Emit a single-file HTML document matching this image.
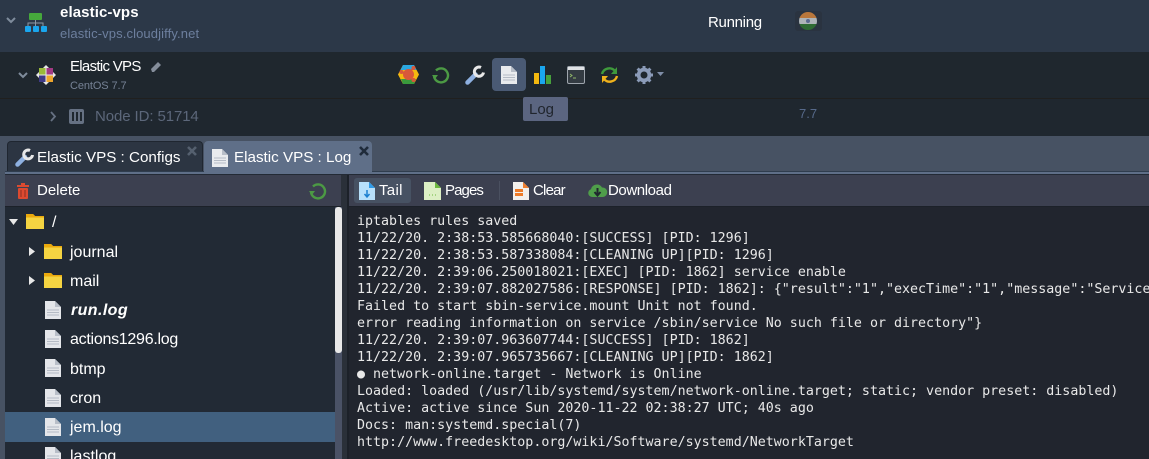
<!DOCTYPE html>
<html><head><meta charset="utf-8"><style>
html{margin:0;padding:0;width:1149px;height:459px;overflow:hidden;background:#21252e}
body{margin:0;padding:0;width:1149px;height:459px;position:relative;overflow:hidden;background:#21252e;font-family:"Liberation Sans",sans-serif;color:#fff}
#w{position:absolute;left:0;top:0;width:1149px;height:459px;overflow:hidden}
.a{position:absolute}
.t{position:absolute;white-space:nowrap;font-size:16px;line-height:20px;color:#fff}
svg{position:absolute;overflow:visible}
#log{position:absolute;left:357px;top:213px;font-family:"DejaVu Sans Mono",monospace;font-size:13.32px;line-height:17px;color:#e8e8e8;white-space:pre}
</style></head><body><div id="w">
<div class="a" style="left:0;top:0;width:1149px;height:52px;background:#2c3848"></div>
<div class="a" style="left:0;top:52px;width:1149px;height:46px;background:#1f272e"></div>
<div class="a" style="left:0;top:98px;width:1149px;height:1px;background:#20201f"></div>
<div class="a" style="left:0;top:99px;width:1149px;height:37px;background:#1f272f"></div>
<!-- panel -->
<div class="a" style="left:0;top:136px;width:1149px;height:35px;background:#475263"></div>
<div class="a" style="left:0;top:171px;width:1149px;height:1px;background:#2f3d4e"></div>
<div class="a" style="left:5px;top:172px;width:1144px;height:2px;background:#5f6f88"></div>
<div class="a" style="left:0;top:136px;width:5px;height:323px;background:#475263"></div>
<div class="a" style="left:5px;top:174px;width:1144px;height:1px;background:#232a35"></div>
<div class="a" style="left:5px;top:175px;width:336px;height:31px;background:#3c4050"></div>
<div class="a" style="left:349px;top:175px;width:800px;height:31px;background:#3c4050"></div>
<div class="a" style="left:341px;top:175px;width:8px;height:284px;background:#2a3039"></div>
<div class="a" style="left:5px;top:206px;width:336px;height:1px;background:#1c2129"></div>
<div class="a" style="left:5px;top:207px;width:330px;height:252px;background:#222a35"></div>
<div class="a" style="left:335px;top:207px;width:7px;height:252px;background:#4a5266"></div>
<div class="a" style="left:335px;top:207px;width:7px;height:146px;background:#e8e8e8;border-radius:3px"></div>
<div class="a" style="left:347px;top:175px;width:2px;height:284px;background:#1c2129"></div>
<div class="a" style="left:349px;top:206px;width:800px;height:1px;background:#1c2129"></div>

<!-- header row -->
<svg style="left:6px;top:16px" width="10" height="8"><path d="M1 2l4 4 4-4" fill="none" stroke="#7f8c9c" stroke-width="2"/></svg>
<svg style="left:24px;top:12px" width="24" height="20">
<rect x="5" y="1" width="13" height="7" rx="1" fill="#46a83c"/>
<path d="M11.5 8v3M4 14v-3h15v3M11.5 11v3" stroke="#8b97a5" fill="none"/>
<rect x="1" y="14" width="6" height="6" rx="1" fill="#1aa6ee"/><rect x="9" y="14" width="6" height="6" rx="1" fill="#1aa6ee"/><rect x="17" y="14" width="6" height="6" rx="1" fill="#1aa6ee"/></svg>
<div class="t" style="left:60px;top:3px;font-weight:bold;font-size:15px;letter-spacing:.1px">elastic-vps</div>
<div class="t" style="left:60px;top:24px;font-size:13px;color:#6d7f9e;letter-spacing:.12px">elastic-vps.cloudjiffy.net</div>
<div class="t" style="left:708px;top:13px;font-size:15px;letter-spacing:-.3px">Running</div>
<div class="a" style="left:795px;top:11px;width:27px;height:20px;background:#2a3340;border-radius:3px"></div>
<div class="a" style="left:799px;top:12px;width:18px;height:18px;border-radius:50%;background:linear-gradient(#b9773c 0,#b9773c 33%,#aeb4b8 33%,#aeb4b8 67%,#2f6b34 67%)"></div>
<div class="a" style="left:806px;top:19px;width:4px;height:4px;border-radius:50%;background:#5c6a90"></div>

<!-- row 2 -->
<svg style="left:18px;top:71px" width="10" height="8"><path d="M1 2l4 4 4-4" fill="none" stroke="#7f8c9c" stroke-width="2"/></svg>
<svg style="left:36px;top:65px" width="20" height="20">
<path d="M10 0l10 10-10 10L0 10z" fill="#e8e8e8"/>
<rect x="3" y="3" width="6.5" height="6.5" fill="#9aba3a"/><rect x="10.5" y="3" width="6.5" height="6.5" fill="#a23a84"/>
<rect x="3" y="10.5" width="6.5" height="6.5" fill="#3f3a86"/><rect x="10.5" y="10.5" width="6.5" height="6.5" fill="#eea52c"/></svg>
<div class="t" style="left:70px;top:57px;font-size:15px;letter-spacing:-.7px">Elastic VPS</div>
<svg style="left:150px;top:60px" width="13" height="13"><path d="M1 9l7-7 3 3-7 7H2z" fill="#858e9b"/></svg>
<div class="t" style="left:70px;top:76px;font-size:11px;color:#768295;letter-spacing:-.1px">CentOS 7.7</div>

<!-- toolbar icons -->
<svg style="left:398px;top:64px" width="21" height="21">
<path d="M5 1h11l5 9.500-5 9.500H5L0 10.500z" fill="#f4b80f"/><path d="M5 1h11l2.500 5H2.500z" fill="#2aa7e0"/><path d="M3 15h15l-2 5H5z" fill="#3a9a3c"/>
<circle cx="10.500" cy="10.500" r="5.500" fill="#d9583a"/><path d="M4 8l6 2M15 4l-4 6M15 16l-4-5" stroke="#d9583a" stroke-width="1.500"/><circle cx="3.500" cy="8" r="2" fill="#d9583a"/><circle cx="15.500" cy="4" r="2" fill="#d9583a"/><circle cx="15.500" cy="16" r="2" fill="#d9583a"/></svg>
<svg style="left:432px;top:66px" width="18" height="18"><path d="M4 4.500A7 7 0 1 1 2 9.500" fill="none" stroke="#4c9a44" stroke-width="2.4"/><path d="M0 9h6l-3 4z" fill="#4c9a44"/></svg>
<svg style="left:465px;top:65px" width="20" height="20"><path d="M2.500 17.500L10.500 9.500" stroke="#8eb0e0" stroke-width="4.500" stroke-linecap="round"/><path d="M18.500 7.500A4.600 4.600 0 1 1 16 2.500" fill="none" stroke="#e8e8e8" stroke-width="3"/></svg>
<div class="a" style="left:492px;top:58px;width:34px;height:33px;background:#4a5a74;border-radius:4px"></div>
<svg style="left:501px;top:66px" width="16" height="18"><path d="M0 0h10l6 6v12H0z" fill="#e9ebee"/><path d="M10 0l6 6h-6z" fill="#b8bec8"/><path d="M2 9h12M2 11.500h12M2 14h12" stroke="#b5bbc5"/></svg>
<svg style="left:534px;top:66px" width="18" height="18"><rect x="0" y="7" width="5" height="11" fill="#f4b80f"/><rect x="6" y="0" width="5" height="18" fill="#1aa6ee"/><rect x="12" y="9" width="5" height="9" fill="#46a03c"/></svg>
<svg style="left:567px;top:66px" width="18" height="18"><rect x=".5" y=".5" width="17" height="17" rx="1.500" fill="#333b42" stroke="#9ea5ad"/><rect x="1" y="1" width="16" height="3" fill="#dfe2e5"/><path d="M3 8l2 1.500-2 1.500M6 12h3" stroke="#8fb76a" fill="none"/></svg>
<svg style="left:600px;top:66px" width="19" height="18"><path d="M2 8a7.500 7.500 0 0 1 13-3" fill="none" stroke="#3f9a3c" stroke-width="2.400"/><path d="M17 1v7h-6z" fill="#3f9a3c"/><path d="M17 10a7.500 7.500 0 0 1-13 3" fill="none" stroke="#f0b21c" stroke-width="2.400"/><path d="M2 17v-7h6z" fill="#f0b21c"/></svg>
<svg style="left:635px;top:66px" width="18" height="18"><circle cx="9" cy="9" r="5.500" fill="none" stroke="#8b9bb8" stroke-width="3.500"/><path d="M9 0v18M0 9h18M2.600 2.600l12.800 12.800M15.400 2.600L2.600 15.400" stroke="#8b9bb8" stroke-width="3"/><circle cx="9" cy="9" r="3.500" fill="#1f272e"/></svg>
<svg style="left:657px;top:72px" width="8" height="5"><path d="M0 0h7l-3.500 4z" fill="#7f8ea8"/></svg>
<div class="a" style="left:523px;top:97px;width:45px;height:24px;background:#5b6580;border-radius:2px"></div>
<div class="t" style="left:529px;top:100px;font-size:15px;color:#20252d">Log</div>

<!-- row 3 -->
<svg style="left:50px;top:111px" width="7" height="11"><path d="M1 1l4 4.500-4 4.500" fill="none" stroke="#667183" stroke-width="1.800"/></svg>
<div class="a" style="left:69px;top:109px;width:15px;height:15px;background:#667183;border-radius:2px"></div>
<div class="a" style="left:72px;top:112px;width:2px;height:9px;background:#1f272f;box-shadow:4px 0 0 #1f272f,8px 0 0 #1f272f"></div>
<div class="t" style="left:95px;top:107px;font-size:15px;color:#5c677a;letter-spacing:-.1px">Node ID: 51714</div>
<div class="t" style="left:799px;top:104px;font-size:13px;color:#56698a">7.7</div>

<!-- tabs -->
<div class="a" style="left:7px;top:141px;width:194px;height:29px;background:#2c3542;border:1px solid #1f2630;border-bottom:0;border-radius:4px 4px 0 0"></div>
<div class="a" style="left:204px;top:141px;width:168px;height:33px;background:#5f6f88;border-radius:4px 4px 0 0"></div>
<svg style="left:15px;top:148px" width="19" height="19"><path d="M2.500 16.500L10 9" stroke="#8eb0e0" stroke-width="4.500" stroke-linecap="round"/><path d="M17.500 7A4.400 4.400 0 1 1 15 2.500" fill="none" stroke="#e8e8e8" stroke-width="3"/></svg>
<div class="t" style="left:37px;top:148px;font-size:15.2px">Elastic VPS : Configs</div>
<svg style="left:187px;top:146px" width="11" height="11"><path d="M1 1l8 8M9 1l-8 8" stroke="#55606f" stroke-width="2.600"/></svg>
<svg style="left:212px;top:149px" width="16" height="18"><path d="M0 0h10l6 6v12H0z" fill="#e9ebee"/><path d="M10 0l6 6h-6z" fill="#b8bec8"/><path d="M2 9h12M2 11.500h12M2 14h12" stroke="#b5bbc5"/></svg>
<div class="t" style="left:234px;top:148px;font-size:15.2px">Elastic VPS : Log</div>
<svg style="left:359px;top:146px" width="11" height="11"><path d="M1 1l8 8M9 1l-8 8" stroke="#1f2b3a" stroke-width="2.600"/></svg>

<!-- left toolbar -->
<svg style="left:17px;top:183px" width="12" height="16"><rect x="0" y="2" width="12" height="2" fill="#dc4a30"/><rect x="4" y="0" width="4" height="2" fill="#dc4a30"/><rect x="1" y="5" width="10" height="11" rx="1" fill="#dc4a30"/><path d="M4 7v7M8 7v7" stroke="#8a2e20"/></svg>
<div class="t" style="left:37px;top:181px;font-size:15px">Delete</div>
<svg style="left:309px;top:182px" width="17" height="17"><path d="M4 4.500A7 7 0 1 1 2 9.500" fill="none" stroke="#4c9a44" stroke-width="2.400"/><path d="M0 9h6l-3 4z" fill="#4c9a44"/></svg>

<!-- log toolbar -->
<div class="a" style="left:354px;top:178px;width:57px;height:25px;background:#475263;border-radius:3px"></div>
<svg style="left:359px;top:182px" width="16" height="18"><path d="M0 0h10l6 6v12H0z" fill="#b7e0fb"/><path d="M10 0l6 6h-6z" fill="#2f9be8"/><path d="M8 8v6M5.500 12L8 15l2.500-3" stroke="#1b7fd0" fill="none" stroke-width="1.500"/></svg>
<div class="t" style="left:379px;top:181px;font-size:15px;letter-spacing:.3px">Tail</div>
<svg style="left:424px;top:182px" width="17" height="18"><path d="M0 0h11l6 6v12H0z" fill="#dcefc4"/><path d="M11 0l6 6h-6z" fill="#6cb83e"/><path d="M5 13h1M8 13h1M11 13h1" stroke="#6cb83e"/></svg>
<div class="t" style="left:445px;top:181px;font-size:15px;letter-spacing:-.9px">Pages</div>
<div class="a" style="left:499px;top:181px;width:1px;height:19px;background:#4a5060"></div>
<svg style="left:513px;top:182px" width="16" height="18"><path d="M0 0h10l6 6v12H0z" fill="#f3f0ec"/><path d="M10 0l6 6h-6z" fill="#f08030"/><rect x="2" y="7" width="8" height="3" fill="#ee7b28"/><rect x="2" y="11" width="8" height="3" fill="#ee7b28"/></svg>
<div class="t" style="left:533px;top:181px;font-size:15px;letter-spacing:-.8px">Clear</div>
<svg style="left:588px;top:183px" width="19" height="15"><path d="M4 14a4 4 0 0 1-1-7.800A6 6 0 0 1 14 4.500a4.500 4.500 0 0 1 1 9.500z" fill="#4f9e4a"/><path d="M9.500 5v6M6.500 9l3 3.500 3-3.500" stroke="#1f272e" fill="none" stroke-width="2"/></svg>
<div class="t" style="left:608px;top:181px;font-size:15px;letter-spacing:-.4px">Download</div>

<!-- tree -->
<div class="a" style="left:5px;top:412px;width:330px;height:30px;background:#41607f"></div>
<svg style="left:9px;top:219px" width="9" height="6"><path d="M0 0h9L4.500 6z" fill="#e8e8e8"/></svg>
<svg style="left:26px;top:213px" width="18" height="16"><path d="M0 1h7l2 2h9v13H0z" fill="#f5d442"/><path d="M0 1h7l2 2h9v1.500H0z" fill="#eba90c"/></svg>
<div class="t" style="left:52px;top:213px">/</div>

<svg style="left:29px;top:247px" width="6" height="9"><path d="M0 0l6 4.500L0 9z" fill="#e8e8e8"/></svg>
<svg style="left:44px;top:243px" width="18" height="16"><path d="M0 1h7l2 2h9v13H0z" fill="#f5d442"/><path d="M0 1h7l2 2h9v1.500H0z" fill="#eba90c"/></svg>
<div class="t" style="left:70px;top:243px">journal</div>
<svg style="left:29px;top:276px" width="6" height="9"><path d="M0 0l6 4.500L0 9z" fill="#e8e8e8"/></svg>
<svg style="left:44px;top:272px" width="18" height="16"><path d="M0 1h7l2 2h9v13H0z" fill="#f5d442"/><path d="M0 1h7l2 2h9v1.500H0z" fill="#eba90c"/></svg>
<div class="t" style="left:70px;top:272px">mail</div>

<svg style="left:45px;top:301px" width="16" height="18"><path d="M0 0h10l6 6v12H0z" fill="#e4e6ea"/><path d="M10 0l6 6h-6z" fill="#b8bec8"/><path d="M2 9h12M2 11.500h12M2 14h12" stroke="#b5bbc5"/></svg>
<div class="t" style="left:71px;top:301px;font-weight:bold;font-style:italic;letter-spacing:.4px">run.log</div>
<svg style="left:45px;top:330px" width="16" height="18"><path d="M0 0h10l6 6v12H0z" fill="#e4e6ea"/><path d="M10 0l6 6h-6z" fill="#b8bec8"/><path d="M2 9h12M2 11.500h12M2 14h12" stroke="#b5bbc5"/></svg>
<div class="t" style="left:70px;top:330px;letter-spacing:-.27px">actions1296.log</div>
<svg style="left:45px;top:359px" width="16" height="18"><path d="M0 0h10l6 6v12H0z" fill="#e4e6ea"/><path d="M10 0l6 6h-6z" fill="#b8bec8"/><path d="M2 9h12M2 11.500h12M2 14h12" stroke="#b5bbc5"/></svg>
<div class="t" style="left:70px;top:360px">btmp</div>
<svg style="left:45px;top:389px" width="16" height="18"><path d="M0 0h10l6 6v12H0z" fill="#e4e6ea"/><path d="M10 0l6 6h-6z" fill="#b8bec8"/><path d="M2 9h12M2 11.500h12M2 14h12" stroke="#b5bbc5"/></svg>
<div class="t" style="left:70px;top:389px">cron</div>
<svg style="left:45px;top:418px" width="16" height="18"><path d="M0 0h10l6 6v12H0z" fill="#e4e6ea"/><path d="M10 0l6 6h-6z" fill="#b8bec8"/><path d="M2 9h12M2 11.500h12M2 14h12" stroke="#b5bbc5"/></svg>
<div class="t" style="left:70px;top:418px">jem.log</div>
<svg style="left:45px;top:447px" width="16" height="18"><path d="M0 0h10l6 6v12H0z" fill="#e4e6ea"/><path d="M10 0l6 6h-6z" fill="#b8bec8"/><path d="M2 9h12M2 11.500h12M2 14h12" stroke="#b5bbc5"/></svg>
<div class="t" style="left:70px;top:447px">lastlog</div>

<div id="log">iptables rules saved
11/22/20. 2:38:53.585668040:[SUCCESS] [PID: 1296]
11/22/20. 2:38:53.587338084:[CLEANING UP][PID: 1296]
11/22/20. 2:39:06.250018021:[EXEC] [PID: 1862] service enable
11/22/20. 2:39:07.882027586:[RESPONSE] [PID: 1862]: {"result":"1","execTime":"1","message":"Service
Failed to start sbin-service.mount Unit not found.
error reading information on service /sbin/service No such file or directory"}
11/22/20. 2:39:07.963607744:[SUCCESS] [PID: 1862]
11/22/20. 2:39:07.965735667:[CLEANING UP][PID: 1862]
● network-online.target - Network is Online
Loaded: loaded (/usr/lib/systemd/system/network-online.target; static; vendor preset: disabled)
Active: active since Sun 2020-11-22 02:38:27 UTC; 40s ago
Docs: man:systemd.special(7)
http://www.freedesktop.org/wiki/Software/systemd/NetworkTarget</div>
</div></body></html>
